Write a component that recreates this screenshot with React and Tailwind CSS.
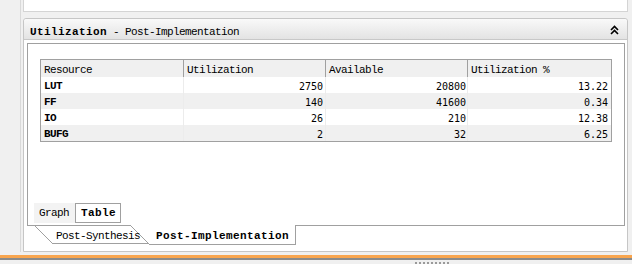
import React from "react";

const rows = [
  { name: "LUT", used: "2750", avail: "20800", pct: "13.22" },
  { name: "FF", used: "140", avail: "41600", pct: "0.34" },
  { name: "IO", used: "26", avail: "210", pct: "12.38" },
  { name: "BUFG", used: "2", avail: "32", pct: "6.25" },
];

function Chevrons() {
  return (
    <svg width="9" height="10" viewBox="0 0 9 10" className="block">
      <polyline points="1,5 4.5,1.5 8,5" fill="none" stroke="#000" strokeWidth="1.6" />
      <polyline points="1,9 4.5,5.5 8,9" fill="none" stroke="#000" strokeWidth="1.6" />
    </svg>
  );
}

function TabRow() {
  return (
    <div className="relative h-[20px] shrink-0">
      <svg width="598" height="20" viewBox="0 0 598 20" className="absolute left-0 top-0" shapeRendering="crispEdges">
        <line x1="0" y1="0.5" x2="104" y2="0.5" stroke="#a0a0a0" />
        <polyline points="7,0 26,19" fill="none" stroke="#a0a0a0" shapeRendering="auto" />
        <line x1="26" y1="18.5" x2="122" y2="18.5" stroke="#a0a0a0" />
        <polygon points="103,0 122,19 268,19 268,0" fill="#fff" stroke="none" />
        <polyline points="103,0 122,19" fill="none" stroke="#a0a0a0" shapeRendering="auto" />
        <line x1="122" y1="19.5" x2="269" y2="19.5" stroke="#a0a0a0" />
        <line x1="268.5" y1="0" x2="268.5" y2="20" stroke="#a0a0a0" />
        <line x1="268" y1="0.5" x2="598" y2="0.5" stroke="#a0a0a0" />
      </svg>
      <div className="relative flex pt-[5px] leading-[13px]">
        <span className="ml-[29px] tracking-[-0.6px]">Post-Synthesis</span>
        <span className="ml-[16px] font-bold tracking-[0.4px]">Post-Implementation</span>
      </div>
    </div>
  );
}

export default function App() {
  return (
    <div className="w-[632px] h-[264px] bg-[#f0f0f0] overflow-hidden flex flex-col [font-family:'Liberation_Mono','Courier_New',monospace] text-[11px] text-black">
      <div className="flex h-[252px] shrink-0">
        <div className="w-[21px] shrink-0 border-r border-[#d9d9d9]" />
        <div className="w-[605px] ml-[2px] shrink-0 flex flex-col">
          <div className="h-[12px] shrink-0 bg-white border-x border-b border-[#d4d4d4]" />
          <div className="mt-[6px] flex-1 flex flex-col bg-white border border-[#c6c6c6] rounded-t-[3px]">
            <div className="h-[21px] shrink-0 flex items-start justify-between pt-[7px] pl-[6px] pr-[8px] border-b border-[#c8c8c8] bg-gradient-to-b from-[#f9f9f9] to-[#e3e3e3] rounded-t-[3px]">
              <div className="leading-[13px]">
                <span className="font-bold tracking-[0.4px]">Utilization</span>
                <span className="tracking-[-0.6px]"> - Post-Implementation</span>
              </div>
              <div className="-mt-[1px]">
                <Chevrons />
              </div>
            </div>
            <div className="flex-1 flex flex-col pt-[3px] pl-[3px] pr-[2px] pb-[6px]">
              <div className="flex-1 flex flex-col border-x border-t border-[#a0a0a0] pt-[15px] pl-[12px] pb-[2px]">
                <div className="w-[572px] border border-[#a0a0a0]">
                  <div className="grid grid-cols-[143px_142px_142px_143px] h-[17px] bg-[#f0f0f0] leading-[13px] tracking-[-0.6px]">
                    <div className="pl-[3px] pt-[4px] border-r border-[#a0a0a0]">Resource</div>
                    <div className="pl-[3px] pt-[4px] border-r border-[#a0a0a0]">Utilization</div>
                    <div className="pl-[3px] pt-[4px] border-r border-[#a0a0a0]">Available</div>
                    <div className="pl-[3px] pt-[4px]">Utilization %</div>
                  </div>
                  {rows.map((r, i) => (
                    <div
                      key={r.name}
                      className={
                        "grid grid-cols-[143px_142px_142px_143px] h-[16px] leading-[13px] " +
                        (i % 2 === 1 ? "bg-[#f0f0f0]" : "bg-white")
                      }
                    >
                      <div className="pl-[3px] pt-[3px] border-r border-[#ececec] font-bold tracking-[-0.6px]">{r.name}</div>
                      <div className="pr-[2px] pt-[3px] border-r border-[#ececec] text-right [font-family:'DejaVu_Sans_Mono',monospace] text-[10px]">{r.used}</div>
                      <div className="pr-[1px] pt-[3px] border-r border-[#ececec] text-right [font-family:'DejaVu_Sans_Mono',monospace] text-[10px]">{r.avail}</div>
                      <div className="pr-[3px] pt-[3px] text-right [font-family:'DejaVu_Sans_Mono',monospace] text-[10px]">{r.pct}</div>
                    </div>
                  ))}
                </div>
                <div className="flex-1" />
                <div className="flex ml-[-6px] h-[20px]">
                  <div className="w-[41px] bg-[#f3f3f3] pl-[5px] pt-[4px] leading-[13px] tracking-[-0.6px]">Graph</div>
                  <div className="w-[46px] bg-white border border-[#a0a0a0] pl-[5px] pt-[3px] leading-[13px] font-bold tracking-[0.4px]">Table</div>
                </div>
              </div>
              <TabRow />
            </div>
          </div>
        </div>
      </div>
      <div className="h-[3px] shrink-0" />
      <div className="h-[3px] shrink-0 bg-[#f8a54e]" />
      <div className="h-[2px] shrink-0 bg-[#8a8a8a]" />
      <div className="flex-1 flex items-end">
        <div className="ml-[415px] flex gap-[2px]">
          {Array.from({ length: 9 }).map((_, i) => (
            <div key={i} className="w-[2px] h-[2px] bg-[#9a9a9a]" />
          ))}
        </div>
      </div>
    </div>
  );
}
